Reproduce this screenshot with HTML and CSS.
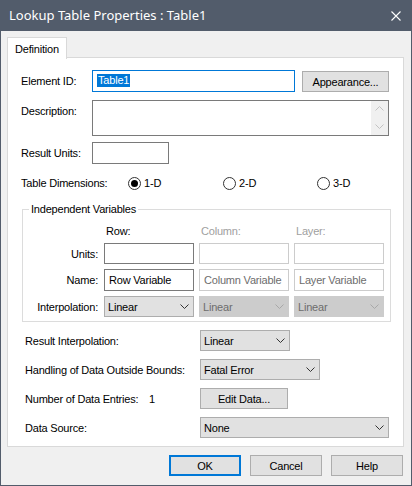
FILE: index.html
```html
<!DOCTYPE html>
<html>
<head>
<meta charset="utf-8">
<link rel="stylesheet" href="styles.css">
</head>
<body>
<div class="window">
  <div class="titlebar">
    <span class="title">Lookup Table Properties : Table1</span>
    <svg class="close" width="10" height="10" viewBox="0 0 10 10"><path d="M0.5 0.5 L9.5 9.5 M9.5 0.5 L0.5 9.5" stroke="#fff" stroke-width="1.1" fill="none"/></svg>
  </div>
  <div class="content">
    <div class="tabs"><div class="tab">Definition</div></div>
    <div class="panel">
      <div class="row r-id">
        <span class="lbl">Element ID:</span>
        <div class="field w-id focus"><span class="sel">Table1</span></div>
        <div class="btn b-app">Appearance...</div>
      </div>
      <div class="row r-desc">
        <span class="lbl lbl-top">Description:</span>
        <div class="field w-desc">
          <div class="vscroll">
            <svg width="9" height="5" viewBox="0 0 9 5"><polyline points="0.5,4.5 4.5,0.5 8.5,4.5" stroke="#c2c2c2" fill="none"/></svg>
            <svg width="9" height="5" viewBox="0 0 9 5"><polyline points="0.5,0.5 4.5,4.5 8.5,0.5" stroke="#c2c2c2" fill="none"/></svg>
          </div>
        </div>
      </div>
      <div class="row r-units">
        <span class="lbl">Result Units:</span>
        <div class="field w-units"></div>
      </div>
      <div class="row r-dims">
        <span class="lbl lbl-dims">Table Dimensions:</span>
        <div class="radio r1"><span class="dot on"></span>1-D</div>
        <div class="radio r2"><span class="dot"></span>2-D</div>
        <div class="radio r3"><span class="dot"></span>3-D</div>
      </div>
      <fieldset class="group">
        <legend>Independent Variables</legend>
        <div class="vars">
          <span></span>
          <span class="hdr">Row:</span>
          <span class="hdr dis">Column:</span>
          <span class="hdr dis">Layer:</span>

          <span class="rlbl">Units:</span>
          <div class="field"></div>
          <div class="field disf"></div>
          <div class="field disf"></div>

          <span class="rlbl">Name:</span>
          <div class="field txt">Row Variable</div>
          <div class="field txt disf">Column Variable</div>
          <div class="field txt disf">Layer Variable</div>

          <span class="rlbl">Interpolation:</span>
          <div class="select">Linear<svg class="chev" width="9" height="5" viewBox="0 0 9 5"><polyline points="0.5,0.5 4.5,4.5 8.5,0.5" stroke="#333" fill="none"/></svg></div>
          <div class="select sdis">Linear<svg class="chev" width="9" height="5" viewBox="0 0 9 5"><polyline points="0.5,0.5 4.5,4.5 8.5,0.5" stroke="#a8a8a8" fill="none"/></svg></div>
          <div class="select sdis">Linear<svg class="chev" width="9" height="5" viewBox="0 0 9 5"><polyline points="0.5,0.5 4.5,4.5 8.5,0.5" stroke="#a8a8a8" fill="none"/></svg></div>
        </div>
      </fieldset>
      <div class="brow first">
        <span class="blbl">Result Interpolation:</span>
        <div class="select w90">Linear<svg class="chev" width="9" height="5" viewBox="0 0 9 5"><polyline points="0.5,0.5 4.5,4.5 8.5,0.5" stroke="#333" fill="none"/></svg></div>
      </div>
      <div class="brow">
        <span class="blbl">Handling of Data Outside Bounds:</span>
        <div class="select w120">Fatal Error<svg class="chev" width="9" height="5" viewBox="0 0 9 5"><polyline points="0.5,0.5 4.5,4.5 8.5,0.5" stroke="#333" fill="none"/></svg></div>
      </div>
      <div class="brow">
        <span class="blbl"><span class="nlbl">Number of Data Entries:</span><span>1</span></span>
        <div class="btn w88">Edit Data...</div>
      </div>
      <div class="brow">
        <span class="blbl">Data Source:</span>
        <div class="select w189">None<svg class="chev" width="9" height="5" viewBox="0 0 9 5"><polyline points="0.5,0.5 4.5,4.5 8.5,0.5" stroke="#333" fill="none"/></svg></div>
      </div>
    </div>
    <div class="actions">
      <div class="btn dlg default">OK</div>
      <div class="btn dlg">Cancel</div>
      <div class="btn dlg">Help</div>
    </div>
  </div>
</div>
</body>
</html>
```
FILE: styles.css
```css
* { box-sizing: border-box; }
html, body { margin: 0; padding: 0; background: #f0f0f0; }
body { font-family: "Liberation Sans", Arial, sans-serif; font-size: 11px; color: #000; letter-spacing: -0.2px; }

.window {
  width: 412px; height: 486px;
  border: 1px solid #525c6b;
  background: #f0f0f0;
  display: flex; flex-direction: column;
}
.titlebar {
  height: 30px; background: #525c6b; flex: none;
  display: flex; align-items: center; justify-content: space-between;
  padding: 0 10px 0 8px;
}
.title { color: #fff; font-family: "Noto Sans", sans-serif; font-size: 13px; letter-spacing: 0; position: relative; top: -1px; }
.close { display: block; }

.content { flex: 1; display: flex; flex-direction: column; padding: 6px 8px 0 6px; }
.tabs { display: flex; height: 21px; position: relative; z-index: 1; margin-bottom: -1px; }
.tab {
  width: 60px; height: 22px; background: #fff;
  border: 1px solid #d9d9d9; border-bottom: none;
  padding: 4px 0 0 7px; line-height: 14px;
}
.panel {
  width: 397px; height: 390px; background: #fff;
  border: 1px solid #d9d9d9;
  padding: 12px 0 0 13px;
}

.row { display: flex; align-items: flex-start; }
.row > * { flex: none; }
.lbl { width: 71px; line-height: 22px; }
.lbl-top { line-height: 14px; padding-top: 4px; }
.r-desc { margin-top: 8px; }
.r-units { margin-top: 6px; }
.r-dims { margin-top: 11px; height: 16px; align-items: center; }
.lbl-dims { width: 107px; line-height: 16px; }

.field {
  height: 22px; border: 1px solid #7a7a7a; background: #fff;
  position: relative;
}
.w-id { width: 203px; padding: 3px 0 0 4px; }
.focus { border-color: #0078d7; }
.sel { background: #0078d7; color: #fff; display: inline-block; line-height: 13px; padding: 0 1px; }
.b-app { width: 87px; height: 21px; margin: 1px 0 0 7px; }
.w-desc { width: 297px; height: 36px; }
.vscroll {
  position: absolute; right: 0; top: 0; bottom: 0; width: 17px;
  background: #f0f0f0;
  display: flex; flex-direction: column; align-items: center; justify-content: space-between;
  padding: 5px 0 6px;
}
.vscroll svg { display: block; }
.w-units { width: 77px; }

.radio { display: flex; align-items: center; width: 95px; line-height: 16px; }
.r2 { width: 94px; }
.r3 { width: 40px; }
.dot {
  width: 13px; height: 13px; border-radius: 50%;
  border: 1px solid #333; background: #fff; margin-right: 3px;
  display: inline-flex; align-items: center; justify-content: center; flex: none;
}
.dot.on::after { content: ""; width: 7px; height: 7px; border-radius: 50%; background: #000; }

.group {
  margin: 11px 0 0 1px; padding: 0 0 4px 0;
  width: 369px; border: 1px solid #dcdcdc;
  min-width: 0;
}
.group legend { margin-left: 6px; padding: 0 2px; line-height: 14px; font-size: 11px; }
.vars {
  display: grid;
  grid-template-columns: 76px 90px 90px 90px;
  grid-template-rows: 14px 21px 22px 21px;
  column-gap: 5px; row-gap: 5px;
  margin-top: 8px;
}
.hdr { padding-left: 2px; line-height: 14px; }
.dis { color: #a0a0a0; }
.rlbl { text-align: right; padding-right: 1px; display: flex; align-items: center; justify-content: flex-end; }
.vars .field { height: auto; }
.txt { display: flex; align-items: center; padding-left: 4px; }
.disf { border-color: #cccccc; color: #6d6d6d; }

.select {
  height: 21px; background: #e1e1e1; border: 1px solid #adadad;
  display: flex; align-items: center; justify-content: space-between;
  padding: 0 4px 0 3px;
}
.sdis { background: #cccccc; border-color: #cccccc; color: #6d6d6d; }
.chev { display: block; }

.brow { display: flex; align-items: center; height: 21px; margin-top: 8px; padding-left: 4px; }
.brow > * { flex: none; }
.blbl { width: 175px; display: flex; }
.nlbl { width: 124px; }
.w90 { width: 90px; }
.w120 { width: 120px; }
.w189 { width: 189px; }
.w88 { width: 88px; }

.btn {
  height: 21px; background: #e1e1e1; border: 1px solid #adadad;
  display: flex; align-items: center; justify-content: center;
}
.actions { display: flex; justify-content: flex-end; gap: 9px; margin-top: 8px; }
.dlg { width: 72px; }
.default { border: 2px solid #0078d7; }
```
